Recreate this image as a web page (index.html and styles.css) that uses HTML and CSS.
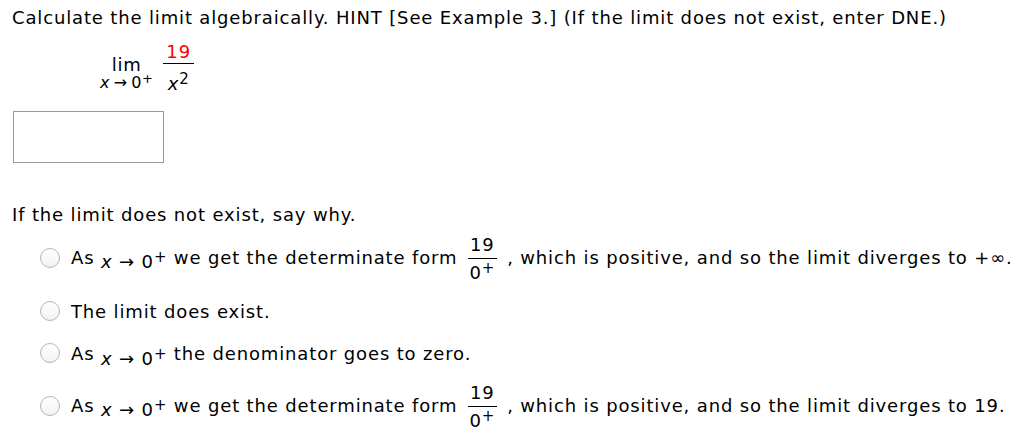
FILE: index.html
```html
<!DOCTYPE html>
<html lang="en">

<head>
    <meta charset="UTF-8">
    <title>Limit question</title>
    <link rel="stylesheet" href="styles.css">
</head>

<body>
    <div class="question">
        <p class="prompt">Calculate the limit algebraically. HINT [See Example 3.] (If the limit does not exist, enter DNE.)</p>

        <div class="expr">
            <div class="lim">
                <span class="lim-word">lim</span>
                <span class="lim-sub"><i>x</i>&thinsp;&rarr;&thinsp;0<sup>+</sup></span>
            </div>
            <div class="frac big">
                <span class="num red">19</span>
                <span class="den"><i>x</i><sup>2</sup></span>
            </div>
        </div>

        <input class="answer" type="text">

        <p class="why">If the limit does not exist, say why.</p>

        <ul class="choices">
            <li class="choice tall">
                <span class="radio"></span>
                <span class="label">As <span class="low"><i>x</i> &rarr; 0<sup>+</sup></span> we get the determinate form
                    <span class="frac"><span class="num">19</span><span class="den">0<sup>+</sup></span></span>
                    , which is positive, and so the limit diverges to +&infin;.</span>
            </li>
            <li class="choice">
                <span class="radio"></span>
                <span class="label">The limit does exist.</span>
            </li>
            <li class="choice">
                <span class="radio"></span>
                <span class="label">As <span class="low"><i>x</i> &rarr; 0<sup>+</sup></span> the denominator goes to zero.</span>
            </li>
            <li class="choice tall">
                <span class="radio"></span>
                <span class="label">As <span class="low"><i>x</i> &rarr; 0<sup>+</sup></span> we get the determinate form
                    <span class="frac"><span class="num">19</span><span class="den">0<sup>+</sup></span></span>
                    , which is positive, and so the limit diverges to 19.</span>
            </li>
        </ul>
    </div>
</body>

</html>
```

FILE: styles.css
```css
body {
    margin: 0;
    font-family: "DejaVu Sans", Verdana, sans-serif;
    font-size: 18px;
    letter-spacing: 0.85px;
    color: #000;
    background: #fff;
}

p {
    margin: 0;
}

sup {
    line-height: 0;
}

.question {
    padding: 6px 12px;
}

.prompt {
    line-height: 24px;
}

.expr {
    display: flex;
    align-items: flex-start;
    margin: 13px 0 0 88px;
}

.lim {
    display: flex;
    flex-direction: column;
    align-items: center;
    margin: 12px 10px 0 0;
}

.lim-word {
    font-size: 18px;
    line-height: 20px;
}

.lim-sub {
    font-size: 16px;
    line-height: 16px;
    letter-spacing: 0.5px;
}

.lim-sub sup {
    font-size: 13px;
    vertical-align: 5px;
}

.frac {
    display: inline-flex;
    flex-direction: column;
    align-items: center;
    vertical-align: middle;
    margin: 0 4px;
}

.frac .num {
    border-bottom: 1px solid #000;
    padding: 0 2px 2px;
    line-height: 22px;
}

.frac .den {
    padding-top: 4px;
    line-height: 20px;
}

.frac sup {
    font-size: 15px;
    vertical-align: 6px;
}

.frac.big {
    margin: 0;
}

.frac.big .num {
    padding: 0 3px 2px;
    line-height: 18px;
}

.frac.big .den {
    padding-top: 10px;
    line-height: 20px;
}

.red {
    color: #f00;
}

i {
    font-style: italic;
}

.answer {
    display: block;
    width: 151px;
    height: 52px;
    margin: 17px 0 0 1px;
    border: 1px solid #999;
    box-sizing: border-box;
    font: inherit;
}

.why {
    margin-top: 40px;
    line-height: 24px;
}

.choices {
    list-style: none;
    padding: 0 0 0 28px;
    margin: -1px 0 0;
}

.choice {
    display: flex;
    align-items: center;
    height: 42px;
}

.choice.tall {
    height: 64px;
}

.label {
    white-space: nowrap;
}

.radio {
    width: 20px;
    height: 20px;
    border: 1px solid #b5b5b5;
    border-radius: 50%;
    box-sizing: border-box;
    background: linear-gradient(#fff, #f2f2f2);
    margin-right: 11px;
    flex-shrink: 0;
}

.low {
    position: relative;
    top: 5px;
}

.low sup {
    font-size: 15px;
    vertical-align: 6px;
}
```
